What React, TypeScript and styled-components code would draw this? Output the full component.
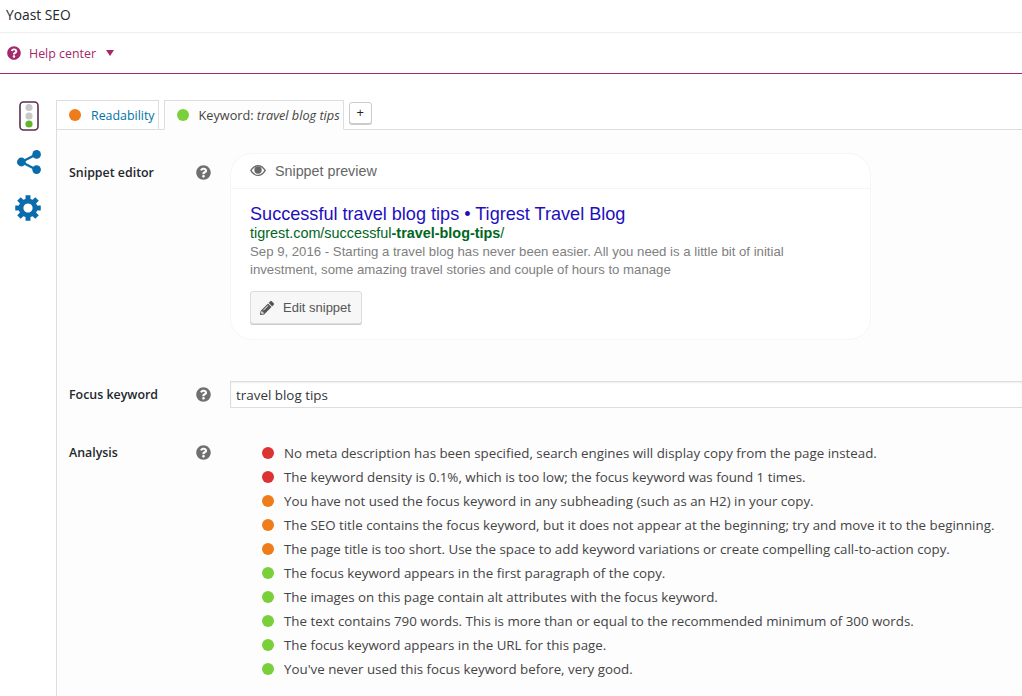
import React from "react";
import styled, { createGlobalStyle } from "styled-components";
import { FaPencilAlt, FaQuestionCircle } from "react-icons/fa";

const GlobalStyle = createGlobalStyle`
    html, body {
        margin: 0;
        padding: 0;
        background: #fff;
        overflow: hidden;
    }
    body {
        font-family: "Open Sans", "Liberation Sans", sans-serif;
        font-size: 12px;
        color: #444;
    }
`;

const Page = styled.div`
    width: 1022px;
    height: 696px;
    overflow: hidden;
`;

const TitleBar = styled.div`
    height: 33px;
    box-sizing: border-box;
    padding: 6px 0 0 6px;
    border-bottom: 1px solid #eee;
    font-size: 13.8px;
    line-height: 18px;
    color: #23282d;
`;

const HelpBar = styled.div`
    height: 41px;
    box-sizing: border-box;
    display: flex;
    align-items: center;
    padding: 0 0 0 7px;
    border-bottom: 1px solid #a4286a;
    color: #a4286a;
    font-size: 12.4px;
`;

const HelpIcon = styled(FaQuestionCircle)`
    font-size: 14px;
    margin-right: 8px;
`;

const Caret = styled.span`
    width: 0;
    height: 0;
    margin-left: 10px;
    border-left: 4px solid transparent;
    border-right: 4px solid transparent;
    border-top: 6px solid #a4286a;
`;

const Body = styled.div`
    display: flex;
    padding-top: 26px;
`;

const Sidebar = styled.div`
    width: 56px;
    flex: none;
    display: flex;
    flex-direction: column;
    align-items: center;
    color: #0a6cab;
`;

const TrafficLight = styled.svg`
    width: 20px;
    height: 30px;
    margin: 1px 0 0 1px;
`;

const ShareSvg = styled.svg`
    width: 24px;
    height: 24px;
    margin: 19px 0 0 1px;
`;

const GearSvg = styled.svg`
    width: 26px;
    height: 26px;
    margin-top: 21px;
`;

const Main = styled.div`
    flex: 1;
    min-width: 0;
`;

const TabRow = styled.div`
    display: flex;
    align-items: flex-start;
    height: 30px;
    box-sizing: border-box;
    border-bottom: 1px solid #ddd;
`;

const Tab = styled.div<{ $active?: boolean }>`
    height: ${(p) => (p.$active ? "30px" : "29px")};
    box-sizing: border-box;
    display: flex;
    align-items: center;
    margin-right: 5px;
    padding: 0 3px 0 12px;
    border: 1px solid #ddd;
    border-bottom: ${(p) => (p.$active ? "1px solid #fdfdfd" : "none")};
    background: ${(p) => (p.$active ? "#fdfdfd" : "#fff")};
    color: ${(p) => (p.$active ? "#444" : "#0073aa")};
    font-size: ${(p) => (p.$active ? "12.7px" : "12.4px")};
    white-space: nowrap;
`;

const Dot = styled.span<{ $color: string }>`
    flex: none;
    width: 12px;
    height: 12px;
    border-radius: 50%;
    background: ${(p) => p.$color};
`;

const TabDot = styled(Dot)`
    margin-right: 10px;
`;

const AddButton = styled.button`
    width: 23px;
    height: 22px;
    margin-top: 2px;
    padding: 0 0 2px;
    border: 1px solid #ccc;
    border-radius: 3px;
    background: #fff;
    box-shadow: 0 1px 0 #ccc;
    color: #222;
    font-family: inherit;
    font-size: 13px;
`;

const Content = styled.div`
    height: 566px;
    box-sizing: border-box;
    border-left: 1px solid #ddd;
    background: #fdfdfd;
    padding: 23px 0 0 12px;
`;

const Row = styled.div<{ $gap: number }>`
    display: flex;
    align-items: flex-start;
    margin-bottom: ${(p) => p.$gap}px;
`;

const Label = styled.div<{ $top: number }>`
    width: 127px;
    flex: none;
    margin-top: ${(p) => p.$top}px;
    font-size: 12.4px;
    font-weight: 600;
    line-height: 20px;
    color: #23282d;
`;

const LabelHelp = styled(FaQuestionCircle)<{ $top: number }>`
    flex: none;
    width: 15px;
    height: 15px;
    margin: ${(p) => p.$top + 2}px 19px 0 0;
    color: #707070;
`;

const SnippetCard = styled.div`
    width: 641px;
    height: 187px;
    box-sizing: border-box;
    border: 1px solid #f6f6f6;
    border-radius: 22px;
    background: #fff;
    font-family: "Liberation Sans", Arial, sans-serif;
`;

const SnippetHeader = styled.div`
    height: 35px;
    box-sizing: border-box;
    display: flex;
    align-items: center;
    padding: 0 0 1px 19px;
    border-bottom: 1px solid #f5f5f5;
    color: #666;
    font-size: 14.3px;
`;

const EyeSvg = styled.svg`
    width: 16px;
    height: 11px;
    margin-right: 9px;
`;

const SnippetBody = styled.div`
    padding: 15px 19px 0;
`;

const SnippetTitle = styled.div`
    color: #1e0fbe;
    font-size: 18.1px;
    line-height: 21px;
`;

const SnippetUrl = styled.div`
    color: #006621;
    font-size: 14.4px;
    line-height: 16px;
`;

const SnippetDesc = styled.div`
    width: 560px;
    margin-top: 2px;
    color: #808080;
    font-size: 13.2px;
    line-height: 18px;
`;

const EditButton = styled.button`
    display: flex;
    align-items: center;
    width: 112px;
    height: 33px;
    box-sizing: border-box;
    margin-top: 12px;
    padding: 0 0 0 9px;
    border: 1px solid #ddd;
    border-radius: 3px;
    background: #f7f7f7;
    box-shadow: 0 1px 0 #ccc;
    color: #555;
    font-family: inherit;
    font-size: 13px;
`;

const PencilIcon = styled(FaPencilAlt)`
    font-size: 14px;
    margin-right: 9px;
`;

const KeywordInput = styled.input`
    flex: 1;
    height: 27px;
    box-sizing: border-box;
    padding: 0 5px;
    border: 1px solid #ddd;
    border-right: none;
    box-shadow: inset 0 1px 2px rgba(0, 0, 0, 0.07);
    background: #fff;
    color: #32373c;
    font-family: inherit;
    font-size: 13.4px;
`;

const Results = styled.ul`
    list-style: none;
    margin: 0;
    padding: 0 0 0 32px;
`;

const Result = styled.li`
    display: flex;
    align-items: center;
    height: 24px;
    font-size: 13.33px;
    white-space: nowrap;
    color: #444;
`;

const ResultDot = styled(Dot)`
    margin-right: 10px;
`;

const RED = "#dc3232";
const ORANGE = "#ee7c1b";
const GREEN = "#7ad03a";

const results: [string, string][] = [
    [RED, "No meta description has been specified, search engines will display copy from the page instead."],
    [RED, "The keyword density is 0.1%, which is too low; the focus keyword was found 1 times."],
    [ORANGE, "You have not used the focus keyword in any subheading (such as an H2) in your copy."],
    [ORANGE, "The SEO title contains the focus keyword, but it does not appear at the beginning; try and move it to the beginning."],
    [ORANGE, "The page title is too short. Use the space to add keyword variations or create compelling call-to-action copy."],
    [GREEN, "The focus keyword appears in the first paragraph of the copy."],
    [GREEN, "The images on this page contain alt attributes with the focus keyword."],
    [GREEN, "The text contains 790 words. This is more than or equal to the recommended minimum of 300 words."],
    [GREEN, "The focus keyword appears in the URL for this page."],
    [GREEN, "You've never used this focus keyword before, very good."],
];

// 8 square teeth around a ring, with the hole cut out by even-odd fill
const gearPath = () => {
    const pt = (r: number, deg: number) => {
        const a = (deg * Math.PI) / 180;
        return `${(13 + r * Math.cos(a)).toFixed(2)} ${(13 + r * Math.sin(a)).toFixed(2)}`;
    };
    let d = "";
    for (let i = 0; i < 8; i++) {
        const c = i * 45 - 90;
        d += `${i === 0 ? "M" : "L"}${pt(9.4, c - 15)} L${pt(13, c - 11)} L${pt(13, c + 11)} L${pt(9.4, c + 15)} `;
    }
    return `${d}Z M13 8.4 a4.6 4.6 0 1 0 0.01 0 Z`;
};

const App: React.FC = () => {
    return (
        <Page>
            <GlobalStyle />
            <TitleBar>Yoast SEO</TitleBar>
            <HelpBar>
                <HelpIcon />
                Help center
                <Caret />
            </HelpBar>
            <Body>
                <Sidebar>
                    <TrafficLight viewBox="0 0 20 30">
                        <rect x="1" y="1" width="18" height="28" rx="3.5" fill="#fff" stroke="#5d2f52" strokeWidth="1.6" />
                        <circle cx="10" cy="6.5" r="3.6" fill="#c8c8c8" />
                        <circle cx="10" cy="15" r="3.6" fill="#c8c8c8" />
                        <circle cx="10" cy="23" r="3.6" fill="#64b32a" />
                    </TrafficLight>
                    <ShareSvg viewBox="0 0 24 24" fill="currentColor">
                        <path d="M4.5 12 L19.5 4.2 M4.5 12 L19.5 19.8" stroke="currentColor" strokeWidth="2.4" />
                        <circle cx="19.6" cy="4.4" r="4.3" />
                        <circle cx="4.4" cy="12" r="4.4" />
                        <circle cx="19.6" cy="19.6" r="4.3" />
                    </ShareSvg>
                    <GearSvg viewBox="0 0 26 26" fill="currentColor">
                        <path fillRule="evenodd" d={gearPath()} />
                    </GearSvg>
                </Sidebar>
                <Main>
                    <TabRow>
                        <Tab>
                            <TabDot $color={ORANGE} />
                            Readability
                        </Tab>
                        <Tab $active>
                            <TabDot $color={GREEN} />
                            <span>Keyword: <em>travel blog tips</em></span>
                        </Tab>
                        <AddButton>+</AddButton>
                    </TabRow>
                    <Content>
                        <Row $gap={41}>
                            <Label $top={10}>Snippet editor</Label>
                            <LabelHelp $top={10} />
                            <SnippetCard>
                                <SnippetHeader>
                                    <EyeSvg viewBox="0 0 16 11">
                                        <path d="M0 5.5 C2.5 1.8 5 0 8 0 S13.5 1.8 16 5.5 C13.5 9.2 11 11 8 11 S2.5 9.2 0 5.5 Z" fill="#666" />
                                        <path d="M1.6 5.5 C3.4 3 5.4 1.3 8 1.3 S12.6 3 14.4 5.5 C12.6 8 10.6 9.7 8 9.7 S3.4 8 1.6 5.5 Z" fill="#fff" />
                                        <circle cx="8" cy="5" r="3.7" fill="#666" />
                                    </EyeSvg>
                                    Snippet preview
                                </SnippetHeader>
                                <SnippetBody>
                                    <SnippetTitle>Successful travel blog tips • Tigrest Travel Blog</SnippetTitle>
                                    <SnippetUrl>tigrest.com/successful<b>-travel-blog-tips</b>/</SnippetUrl>
                                    <SnippetDesc>
                                        Sep 9, 2016 - Starting a travel blog has never been easier. All you need is a little bit of initial investment, some amazing travel stories and couple of hours to manage
                                    </SnippetDesc>
                                    <EditButton>
                                        <PencilIcon />
                                        Edit snippet
                                    </EditButton>
                                </SnippetBody>
                            </SnippetCard>
                        </Row>
                        <Row $gap={33}>
                            <Label $top={4}>Focus keyword</Label>
                            <LabelHelp $top={4} />
                            <KeywordInput defaultValue="travel blog tips" />
                        </Row>
                        <Row $gap={0}>
                            <Label $top={2}>Analysis</Label>
                            <LabelHelp $top={2} />
                            <Results>
                                {results.map(([color, text]) => (
                                    <Result key={text}>
                                        <ResultDot $color={color} />
                                        {text}
                                    </Result>
                                ))}
                            </Results>
                        </Row>
                    </Content>
                </Main>
            </Body>
        </Page>
    );
};

export default App;
